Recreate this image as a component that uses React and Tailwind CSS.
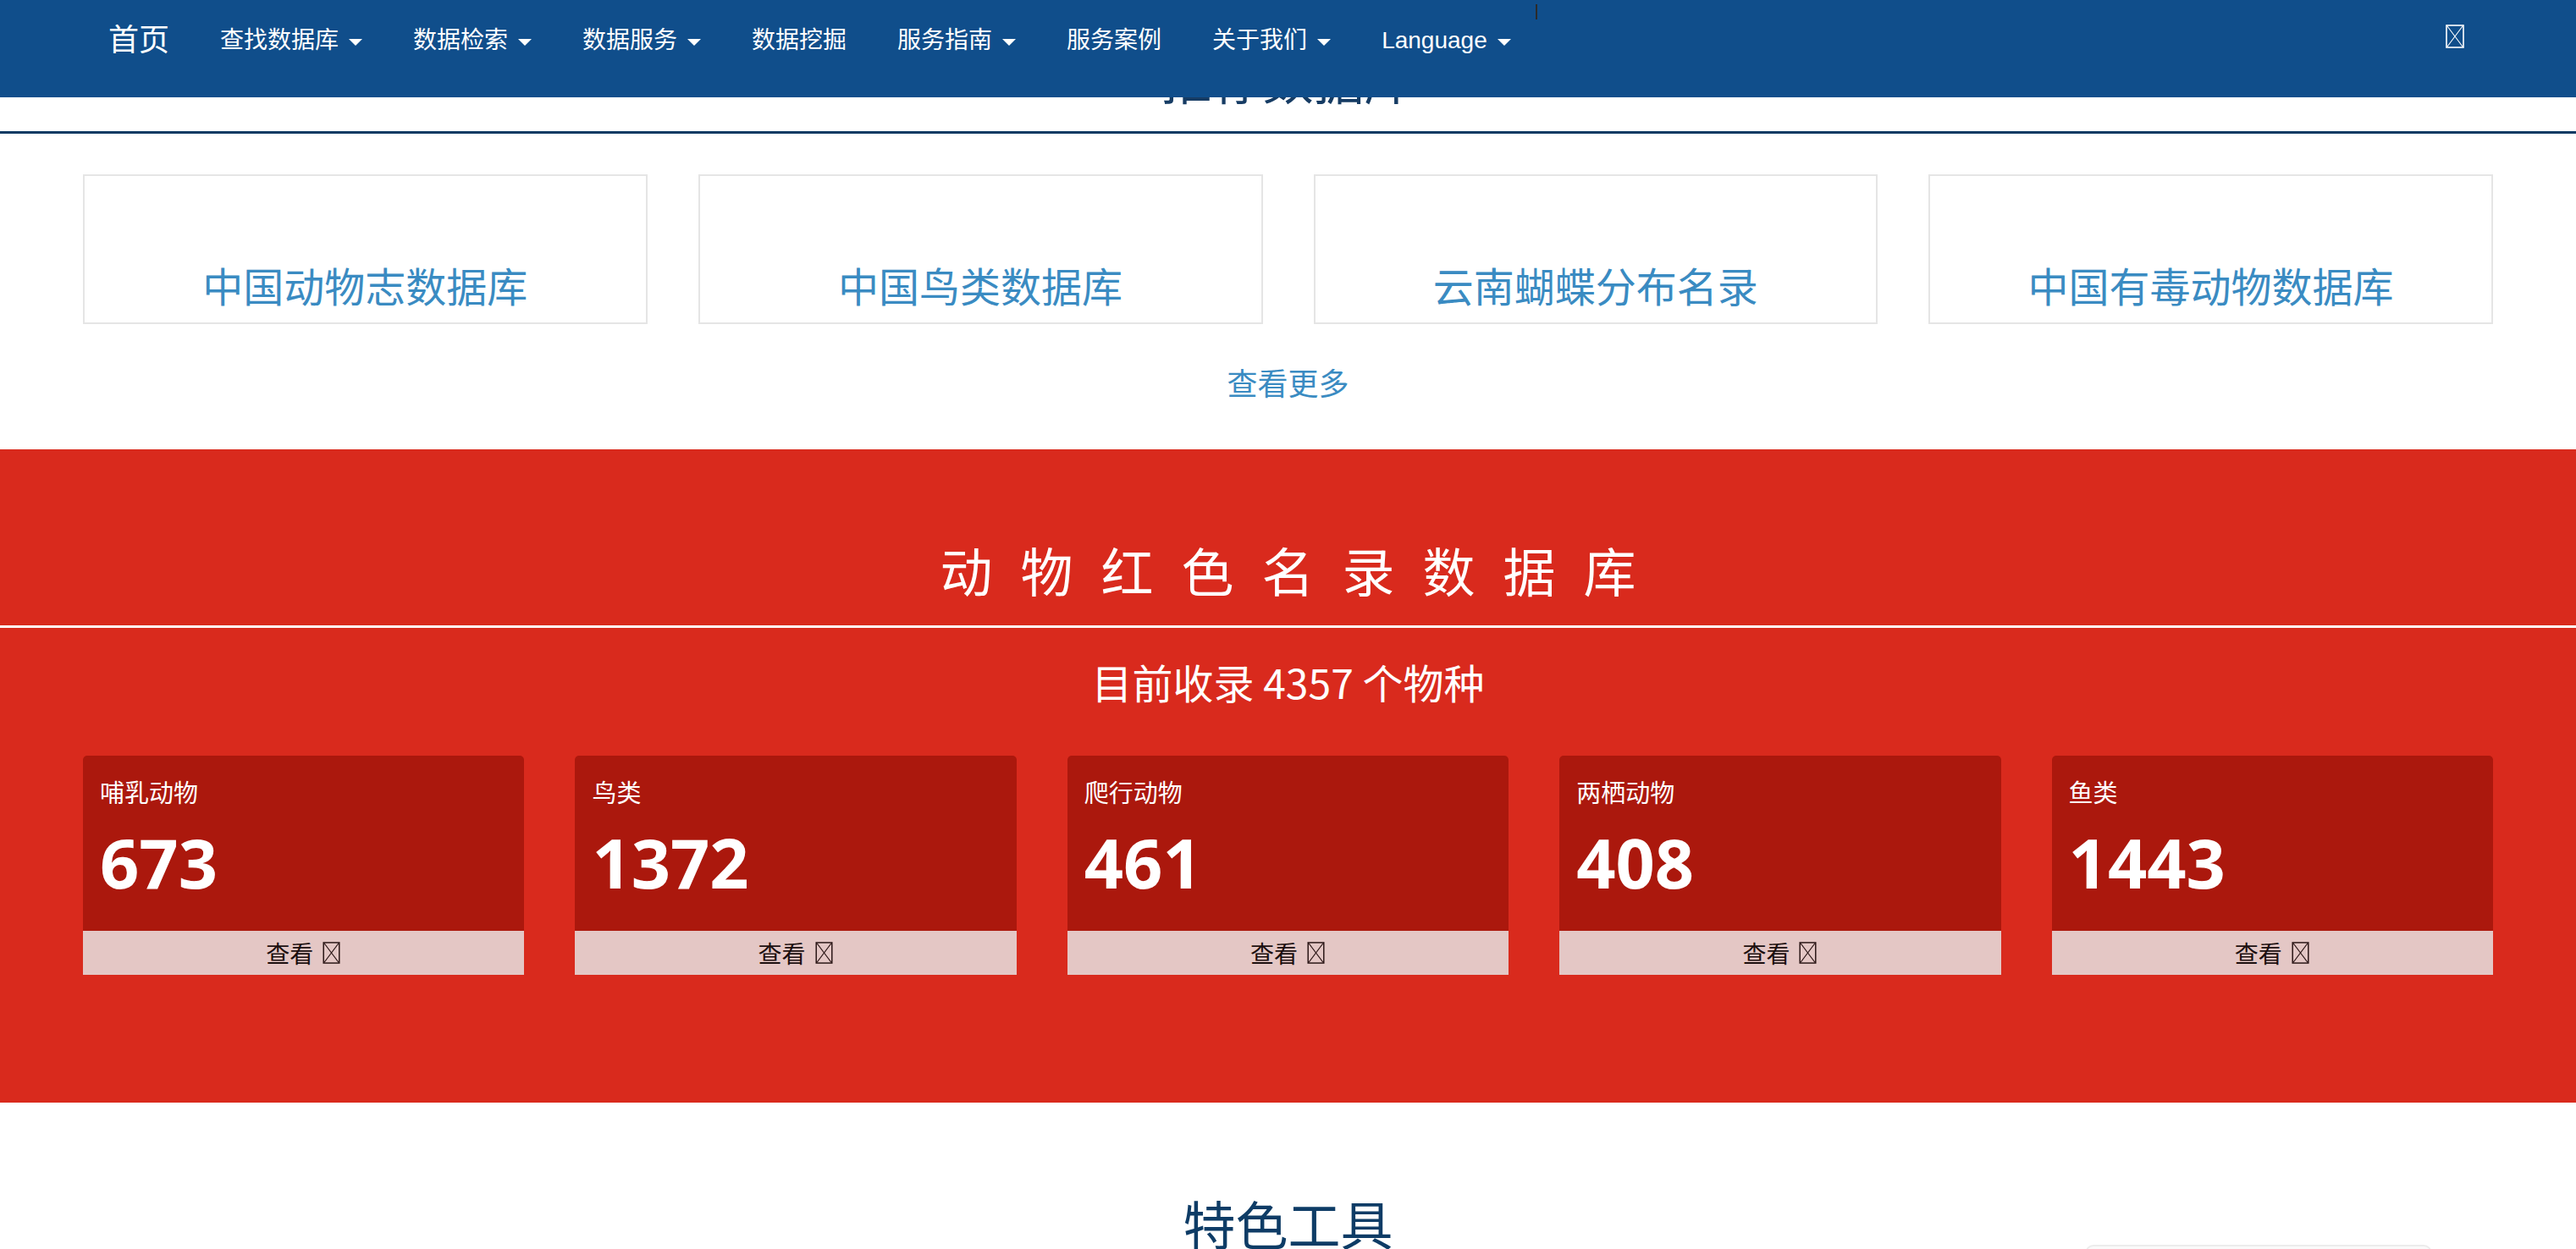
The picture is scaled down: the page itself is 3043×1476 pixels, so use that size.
import React from 'react';

const navItems = [
  { label: '查找数据库', caret: true },
  { label: '数据检索', caret: true },
  { label: '数据服务', caret: true },
  { label: '数据挖掘' },
  { label: '服务指南', caret: true },
  { label: '服务案例' },
  { label: '关于我们', caret: true },
  { label: 'Language', caret: true },
];

const recommended = ['中国动物志数据库', '中国鸟类数据库', '云南蝴蝶分布名录', '中国有毒动物数据库'];

const redList = [
  { name: '哺乳动物', count: 673 },
  { name: '鸟类', count: 1372 },
  { name: '爬行动物', count: 461 },
  { name: '两栖动物', count: 408 },
  { name: '鱼类', count: 1443 },
];

// missing-glyph box, the icon font never loaded on the original page
const Tofu = ({ w, h, color }) => (
  <svg width={w} height={h} viewBox="0 0 22 28" fill="none">
    <rect x="1" y="1" width="20" height="26" stroke={color} strokeWidth="1.6" />
    <path d="M2 2 L20 26 M20 2 L2 26" stroke={color} strokeWidth="1.1" />
  </svg>
);

const Caret = () => (
  <span className="mt-[5px] h-0 w-0 border-x-[8px] border-t-[8px] border-x-transparent border-t-white"></span>
);

export default function App() {
  return (
    <div className="relative min-h-screen w-full bg-white font-['Liberation_Sans','Noto_Sans_CJK_SC',sans-serif]">
      <nav className="absolute left-0 right-0 top-0 z-20 h-[115px] bg-[#104e8b]">
        <div className="flex h-[88px] items-center pl-[128px] pt-[7px] text-white">
          <a className="pr-[30px] text-[36px] leading-none">首页</a>
          {navItems.map((item) => (
            <a key={item.label} className="flex items-center gap-[12px] px-[30px] text-[28px] leading-none">
              <span>{item.label}</span>
              {item.caret && <Caret />}
            </a>
          ))}
        </div>
        <span className="absolute left-[1814px] top-[5px] h-[18px] w-[2px] bg-[#2b2b2b]"></span>
        <span className="absolute right-[132px] top-[29px]">
          <Tofu w={22} h={28} color="#ffffff" />
        </span>
      </nav>

      {/* Recommended databases */}
      <section className="pt-[62px]">
        <h2 className="text-center text-[60px] leading-none text-[#163c64] font-['Noto_Sans_CJK_SC',sans-serif]">推荐数据库</h2>
        <div className="mt-[33px] h-[3px] w-full bg-[#0b3a63]"></div>
        <div className="grid grid-cols-4 gap-[60px] px-[98px] pt-[48px]">
          {recommended.map((name) => (
            <a
              key={name}
              className="flex h-[177px] flex-col items-center justify-end border-2 border-[#e5e5e5] pb-[21px] font-['Noto_Sans_CJK_SC',sans-serif] text-[48px] leading-none text-[#3a8bc2]"
            >
              {name}
            </a>
          ))}
        </div>
        <div className="pb-[62px] pt-[50px] text-center font-['Noto_Sans_CJK_SC',sans-serif] text-[36px] leading-none text-[#3a8bc2]">
          查看更多
        </div>
      </section>

      {/* Red list */}
      <section className="bg-[#d92a1d] pb-[151px] pt-[111px] font-['Noto_Sans_CJK_SC',sans-serif] text-white">
        <h2 className="pl-[33px] text-center text-[62px] leading-none tracking-[33px]">动物红色名录数据库</h2>
        <div className="mt-[35px] h-[3px] w-full bg-white"></div>
        <p className="mt-[39px] text-center text-[48px] leading-none">目前收录 4357 个物种</p>
        <div className="mt-[64px] grid grid-cols-5 gap-[60px] px-[98px]">
          {redList.map((item) => (
            <div key={item.name} className="overflow-hidden rounded-t-[5px]">
              <div className="h-[207px] bg-[#ab180d] pl-[20px] pt-[28px]">
                <div className="text-[29px] leading-none">{item.name}</div>
                <div className="mt-[28px] font-['Open_Sans',sans-serif] text-[81px] font-bold leading-none">{item.count}</div>
              </div>
              <div className="flex h-[52px] items-center justify-center gap-[10px] bg-[#e4c7c5] text-[28px] leading-none text-[#1c0f0f]">
                <span>查看</span>
                <Tofu w={23} h={26} color="#2a1515" />
              </div>
            </div>
          ))}
        </div>
      </section>

      {/* Featured tools */}
      <section className="relative h-[320px] pt-[111px]">
        <h2 className="text-center font-['Noto_Sans_CJK_SC',sans-serif] text-[62px] leading-none text-[#0e3c66]">特色工具</h2>
        <div className="absolute left-[2463px] top-[168px] h-[120px] w-[410px] rounded-[10px] border-2 border-[#ececec] bg-[#fafafa]"></div>
      </section>
    </div>
  );
}
